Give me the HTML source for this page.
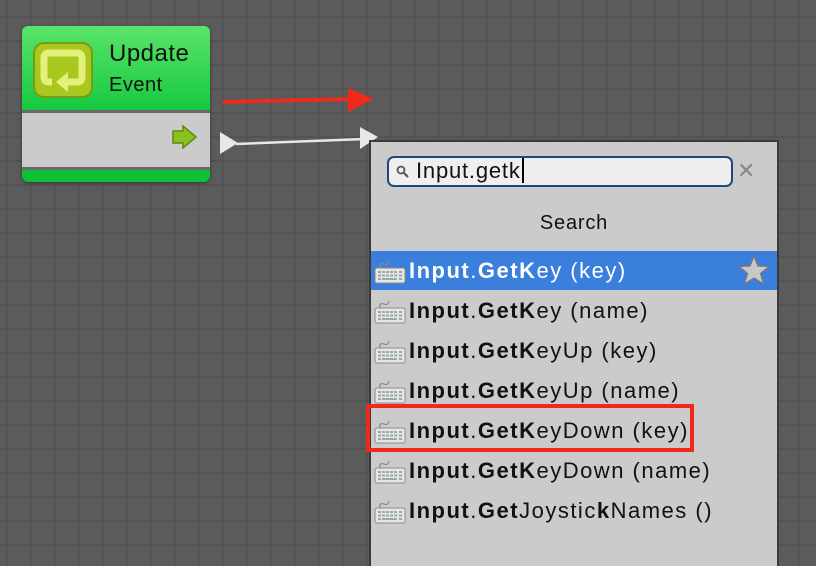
<!DOCTYPE html>
<html><head><style>
*{margin:0;padding:0;box-sizing:border-box}
html,body{width:816px;height:566px;overflow:hidden}
body{position:relative;font-family:"Liberation Sans",sans-serif;
background-color:#5b5b5b;
background-image:linear-gradient(90deg,#535353 2px,transparent 2px),linear-gradient(#535353 2px,transparent 2px);
background-size:24px 24px;background-position:6px 16px;}
.node{position:absolute;left:22px;top:26px;width:188px;height:156px;border-radius:6px;overflow:hidden;box-shadow:0 1px 3px #333}
.hd{height:84px;background:linear-gradient(#5ae46a,#16c940);position:relative}
.bd{height:60px;background:#cbcbcb;border-top:3px solid #6a6a6a;border-bottom:3px solid #6a6a6a}
.ft{height:12px;background:#0fbf35}
.t1{position:absolute;left:87px;top:14px;font-size:24px;color:#111;letter-spacing:0.5px}
.t2{position:absolute;left:87px;top:48px;font-size:20px;color:#111;letter-spacing:0.5px}
.panel{position:absolute;left:369px;top:140px;width:410px;height:440px;background:#cbcbcb;border:2px solid #3a3a3a}
.search{position:absolute;left:16px;top:14px;width:346px;height:31px;border:2px solid #1d4a7a;border-radius:7px;background:#efefef;font-size:22px;letter-spacing:0.8px;padding-left:27px;line-height:26px;color:#111}
.x{position:absolute;left:366px;top:16px;font-size:22px;color:#888}
.lbl{position:absolute;left:0;width:406px;top:70px;text-align:center;font-size:20px;letter-spacing:0.8px;color:#111}
.row{position:absolute;left:0;width:406px;height:39px;font-size:22px;letter-spacing:1.5px;line-height:39px;color:#111;padding-left:38px}
.row b{font-weight:bold}
.row svg{position:absolute;left:3px;top:7px}
.sel{background:#3a7fdc;color:#fff}
</style></head><body>
<svg width="0" height="0" style="position:absolute"><defs>
<symbol id="kb" viewBox="0 0 32 26"><path d="M6 11 Q5 4 10 6 Q14 8 15 3" fill="none" stroke="#888" stroke-width="1.2"/>
<rect x="1" y="10" width="30" height="15" rx="2" fill="#e6e6e6" stroke="#8a8a8a"/>
<g fill="#9aa"><rect x="4" y="13" width="3" height="2"/><rect x="8" y="13" width="3" height="2"/><rect x="12" y="13" width="3" height="2"/><rect x="16" y="13" width="3" height="2"/><rect x="20" y="13" width="3" height="2"/><rect x="25" y="13" width="3" height="2"/>
<rect x="4" y="16.5" width="3" height="2"/><rect x="8" y="16.5" width="3" height="2"/><rect x="12" y="16.5" width="3" height="2"/><rect x="16" y="16.5" width="3" height="2"/><rect x="20" y="16.5" width="3" height="2"/><rect x="25" y="16.5" width="3" height="2"/>
<rect x="4" y="20" width="3" height="2"/><rect x="8" y="20" width="15" height="2"/><rect x="25" y="20" width="3" height="2"/></g></symbol></defs></svg>
<div class="node"><div class="hd">
<svg style="position:absolute;left:11px;top:16px" width="60" height="56" viewBox="0 0 60 56">
<rect x="1" y="1" width="58" height="54" rx="10" fill="#a8c820" stroke="#7a9a10" stroke-width="2"/>
<path d="M19 40 H16 Q11 40 11 35 V16 Q11 11 16 11 H44 Q49 11 49 16 V35 Q49 40 44 40 H33" fill="none" stroke="#e4f07a" stroke-width="7"/>
<path d="M35 30 L23 40 L35 50 Z" fill="#e4f07a"/>
</svg>
<div class="t1">Update</div><div class="t2">Event</div></div>
<div class="bd"></div>
<div class="ft"></div></div>
<svg style="position:absolute;left:0;top:0" width="816" height="566">
<path d="M173 131 H183 V126 L196 137 L183 148 V143 H173 Z" fill="#8cc020" stroke="#5a8a10" stroke-width="1.5"/>
<line x1="223" y1="102" x2="352" y2="99" stroke="#ee2a1a" stroke-width="4"/>
<path d="M348 88 L374 99 L348 112 Z" fill="#ee2a1a"/>
<line x1="236" y1="144" x2="365" y2="139" stroke="#e8e8e8" stroke-width="2.5"/>
<path d="M220 132 L238 143 L220 154 Z" fill="#e8e8e8"/>
<path d="M360 127 L378 137 L360 149 Z" fill="#e8e8e8"/>
</svg>
<div class="panel">
<div class="search"><svg style="position:absolute;left:7px;top:7px" width="14" height="14"><circle cx="5" cy="5" r="3.5" fill="none" stroke="#555" stroke-width="1.8"/><line x1="8" y1="8" x2="12" y2="12" stroke="#555" stroke-width="2.2"/></svg>Input.getk<span style="border-left:2px solid #000;margin-left:1px"></span></div>
<div class="x">✕</div>
<div class="lbl">Search</div>
<div class="row sel" style="top:109px"><svg width="32" height="26"><use href="#kb"/></svg><b>Input</b>.<b>GetK</b>ey (key)<svg style="left:366px;top:3px" width="34" height="32" viewBox="0 0 34 32"><path d="M17 2 L21 12 L32 12.5 L23.5 19.5 L26.5 30 L17 24 L7.5 30 L10.5 19.5 L2 12.5 L13 12 Z" fill="#c8c8c8" stroke="#777" stroke-width="1.2"/></svg></div>
<div class="row" style="top:149px"><svg width="32" height="26"><use href="#kb"/></svg><b>Input</b>.<b>GetK</b>ey (name)</div>
<div class="row" style="top:189px"><svg width="32" height="26"><use href="#kb"/></svg><b>Input</b>.<b>GetK</b>eyUp (key)</div>
<div class="row" style="top:229px"><svg width="32" height="26"><use href="#kb"/></svg><b>Input</b>.<b>GetK</b>eyUp (name)</div>
<div class="row" style="top:269px"><svg width="32" height="26"><use href="#kb"/></svg><b>Input</b>.<b>GetK</b>eyDown (key)</div>
<div class="row" style="top:309px"><svg width="32" height="26"><use href="#kb"/></svg><b>Input</b>.<b>GetK</b>eyDown (name)</div>
<div class="row" style="top:349px"><svg width="32" height="26"><use href="#kb"/></svg><b>Input</b>.<b>Get</b>Joystic<b>k</b>Names ()</div>
</div>
<div style="position:absolute;left:366px;top:404px;width:328px;height:48px;border:4px solid #f02a1a"></div>
</body></html>
